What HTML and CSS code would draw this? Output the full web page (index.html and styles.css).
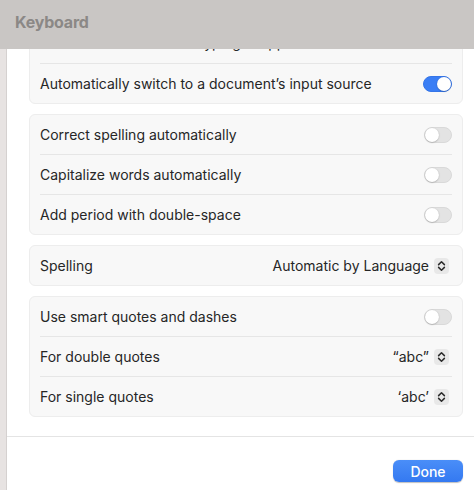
FILE: index.html
```html
<!DOCTYPE html>
<html lang="en">
<head>
    <meta charset="UTF-8">
    <meta name="viewport" content="width=device-width, initial-scale=1.0">
    <title>Keyboard</title>
    <link rel="stylesheet" href="styles.css">
</head>
<body>

    <div class="window">
        <header class="titlebar">Keyboard</header>

        <div class="window-body">
            <div class="backdrop"></div>

            <div class="sheet">
                <div class="scroll">
                    <div class="content">

                        <section class="group">
                            <div class="row row-center">
                                <span class="note">when typing in apps</span>
                            </div>
                            <div class="row">
                                <span class="label">Automatically switch to a document’s input source</span>
                                <span class="toggle on"><span class="knob"></span></span>
                            </div>
                        </section>

                        <section class="group">
                            <div class="row">
                                <span class="label">Correct spelling automatically</span>
                                <span class="toggle"><span class="knob"></span></span>
                            </div>
                            <div class="row">
                                <span class="label">Capitalize words automatically</span>
                                <span class="toggle"><span class="knob"></span></span>
                            </div>
                            <div class="row">
                                <span class="label">Add period with double-space</span>
                                <span class="toggle"><span class="knob"></span></span>
                            </div>
                        </section>

                        <section class="group">
                            <div class="row">
                                <span class="label">Spelling</span>
                                <span class="popup">
                                    <span class="value">Automatic by Language</span>
                                    <span class="stepper">
                                        <svg width="15" height="16" viewBox="0 0 15 16">
                                            <path d="M4.6 6.6 L7.5 3.7 L10.4 6.6 M4.6 9.4 L7.5 12.3 L10.4 9.4" fill="none" stroke="#2b2b2b" stroke-width="1.5" stroke-linecap="round" stroke-linejoin="round"/>
                                        </svg>
                                    </span>
                                </span>
                            </div>
                        </section>

                        <section class="group">
                            <div class="row">
                                <span class="label">Use smart quotes and dashes</span>
                                <span class="toggle"><span class="knob"></span></span>
                            </div>
                            <div class="row">
                                <span class="label">For double quotes</span>
                                <span class="popup">
                                    <span class="value">“abc”</span>
                                    <span class="stepper">
                                        <svg width="15" height="16" viewBox="0 0 15 16">
                                            <path d="M4.6 6.6 L7.5 3.7 L10.4 6.6 M4.6 9.4 L7.5 12.3 L10.4 9.4" fill="none" stroke="#2b2b2b" stroke-width="1.5" stroke-linecap="round" stroke-linejoin="round"/>
                                        </svg>
                                    </span>
                                </span>
                            </div>
                            <div class="row">
                                <span class="label">For single quotes</span>
                                <span class="popup">
                                    <span class="value">‘abc’</span>
                                    <span class="stepper">
                                        <svg width="15" height="16" viewBox="0 0 15 16">
                                            <path d="M4.6 6.6 L7.5 3.7 L10.4 6.6 M4.6 9.4 L7.5 12.3 L10.4 9.4" fill="none" stroke="#2b2b2b" stroke-width="1.5" stroke-linecap="round" stroke-linejoin="round"/>
                                        </svg>
                                    </span>
                                </span>
                            </div>
                        </section>

                    </div>
                </div>

                <footer class="sheet-footer">
                    <button class="done-button">Done</button>
                </footer>
            </div>
        </div>
    </div>

</body>
</html>
```

FILE: styles.css
```css
body {
    margin: 0;
    padding: 0;
    font-family: Inter, "Liberation Sans", Arial, sans-serif;
    color: #262626;
    background-color: #ffffff;
    overflow: hidden;
}
.window {
    display: flex;
    flex-direction: column;
    width: 474px;
    height: 490px;
    overflow: hidden;
}
.titlebar {
    height: 49px;
    flex-shrink: 0;
    box-sizing: border-box;
    padding: 12px 0 0 15px;
    background-color: #c9c6c4;
    color: #8b8886;
    font-size: 16px;
    font-weight: 700;
    letter-spacing: -0.2px;
}
.window-body {
    display: flex;
    flex: 1;
    min-height: 0;
}
.backdrop {
    width: 6px;
    flex-shrink: 0;
    background-color: #e7e3e2;
    border-right: 1px solid #d5d1d0;
}
.sheet {
    flex: 1;
    display: flex;
    flex-direction: column;
    background-color: #ffffff;
}
.scroll {
    height: 387px;
    flex-shrink: 0;
    overflow: hidden;
}
.content {
    display: flex;
    flex-direction: column;
    gap: 10px;
    margin-top: -26px;
    padding: 0 11px 0 22px;
}
.group {
    background-color: #f8f8f8;
    border: 1px solid #ededed;
    border-radius: 6px;
    padding: 0 10px;
}
.row {
    height: 39px;
    display: flex;
    align-items: center;
    justify-content: space-between;
    font-size: 14px;
}
.row + .row {
    border-top: 1px solid #e6e6e6;
}
.row-center {
    justify-content: center;
    box-sizing: border-box;
    padding: 0 40px 3px 0;
}
.toggle {
    position: relative;
    width: 28px;
    height: 16px;
    box-sizing: border-box;
    border-radius: 8px;
    background-color: #e3e3e3;
    border: 1px solid #d9d9d9;
}
.toggle .knob {
    position: absolute;
    top: 0;
    left: 0;
    width: 14px;
    height: 14px;
    border-radius: 50%;
    background-color: #ffffff;
    box-shadow: 0 0.5px 1.5px rgba(0,0,0,0.3);
}
.toggle.on {
    width: 29px;
    background-color: #3a7ef5;
    border-color: #3575e8;
}
.toggle.on .knob {
    left: auto;
    right: 0;
}
.popup {
    display: flex;
    align-items: center;
    gap: 5px;
    margin-right: 3px;
}
.stepper {
    display: flex;
    width: 15px;
    height: 16px;
    border-radius: 4px;
    background-color: #e8e8e8;
}
.sheet-footer {
    flex: 1;
    display: flex;
    justify-content: flex-end;
    align-items: flex-start;
    padding: 23px 11px 0 0;
    border-top: 1px solid #e4e4e4;
}
.done-button {
    width: 70px;
    height: 22px;
    padding: 0;
    border: none;
    border-radius: 6px;
    background: linear-gradient(#4a8ef8, #3479f1);
    color: #ffffff;
    font-family: Inter, "Liberation Sans", Arial, sans-serif;
    font-size: 14px;
    font-weight: 500;
    box-shadow: 0 0.5px 1px rgba(0,0,0,0.25);
}
```
